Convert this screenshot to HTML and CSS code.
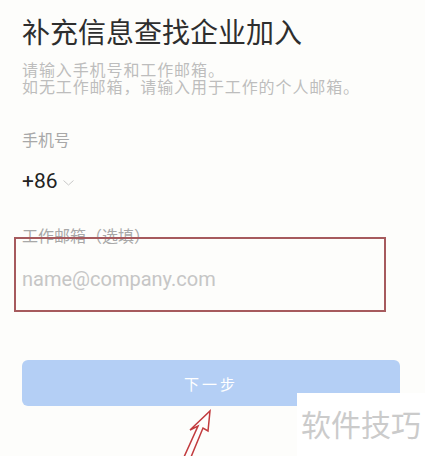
FILE: index.html
```html
<!DOCTYPE html>
<html lang="zh-CN">
<head>
    <meta charset="UTF-8">
    <meta name="viewport" content="width=device-width, initial-scale=1.0">
    <title>补充信息查找企业加入</title>
    <link rel="stylesheet" href="styles.css">
</head>
<body>
    <div class="screen">
        <main class="form">
            <h1>补充信息查找企业加入</h1>
            <p class="hint">请输入手机号和工作邮箱。<br>如无工作邮箱，请输入用于工作的个人邮箱。</p>

            <label class="field-label">手机号</label>
            <div class="phone-row">
                <span class="code">+86</span>
                <svg class="chevron" width="11" height="6" viewBox="0 0 11 6">
                    <polyline points="0.5,0.5 5.5,5 10.5,0.5" fill="none" stroke="#c8c8c8" stroke-width="1"/>
                </svg>
            </div>

            <label class="field-label email-label" for="email">工作邮箱（选填）</label>
            <input class="email-input" id="email" type="text" placeholder="name@company.com">

            <button class="next-btn">下一步</button>
        </main>

        <!-- annotation layer -->
        <div class="mark-box"></div>
        <svg class="mark-arrow" width="45" height="51" viewBox="0 0 45 51">
            <polygon points="35,6 33,26 28,23 16,52 9,52 23,21 15,25" fill="#fffdfd" stroke="#c23b3e" stroke-width="1.5" stroke-linejoin="miter"/>
        </svg>
        <div class="watermark">软件技巧</div>
    </div>
</body>
</html>
```

FILE: styles.css
```css
body {
    margin: 0;
    padding: 0;
    background-color: #fdfdfb;
    font-family: "Noto Sans CJK SC", "Noto Sans", sans-serif;
}
.screen {
    position: relative;
    width: 425px;
    height: 456px;
    overflow: hidden;
}
.form {
    display: flex;
    flex-direction: column;
    align-items: flex-start;
    padding: 13px 22px 0;
}
h1 {
    margin: 0;
    font-size: 28px;
    line-height: 36px;
    font-weight: 400;
    color: #2e2e2e;
}
.hint {
    margin: 12px 0 0;
    font-size: 16px;
    line-height: 17px;
    letter-spacing: 0.9px;
    color: #bdbdbd;
}
.field-label {
    margin-top: 34px;
    font-size: 16px;
    line-height: 20px;
    color: #a8a8a8;
}
.phone-row {
    display: flex;
    align-items: center;
    gap: 5px;
    margin-top: 18px;
    height: 28px;
}
.code {
    font-family: Roboto, "Noto Sans", sans-serif;
    font-size: 21px;
    line-height: 28px;
    color: #222;
}
.chevron {
    margin-top: 3px;
}
.email-label {
    margin-top: 30px;
}
.email-input {
    margin-top: 20px;
    padding: 0;
    width: 360px;
    border: none;
    outline: none;
    background: transparent;
    font-family: Roboto, "Noto Sans", sans-serif;
    font-size: 20px;
    line-height: 28px;
    height: 28px;
    color: #333;
}
.email-input::placeholder {
    color: #c6c6c6;
}
.next-btn {
    margin-top: 67px;
    width: 378px;
    height: 46px;
    border: none;
    border-radius: 6px;
    background-color: #b4cff5;
    color: #fff;
    font-family: "Noto Sans CJK SC", sans-serif;
    font-size: 15px;
    letter-spacing: 3px;
    cursor: pointer;
}
.mark-box {
    position: absolute;
    left: 14px;
    top: 237px;
    width: 372px;
    height: 75px;
    box-sizing: border-box;
    border: 2px solid #a65a5d;
}
.mark-arrow {
    position: absolute;
    left: 175px;
    top: 405px;
}
.watermark {
    position: absolute;
    left: 297px;
    top: 393px;
    right: 0;
    bottom: 0;
    padding: 12px 0 0 4px;
    background-color: #fff;
    font-size: 30px;
    line-height: 36px;
    color: #cbcbcb;
}
```
